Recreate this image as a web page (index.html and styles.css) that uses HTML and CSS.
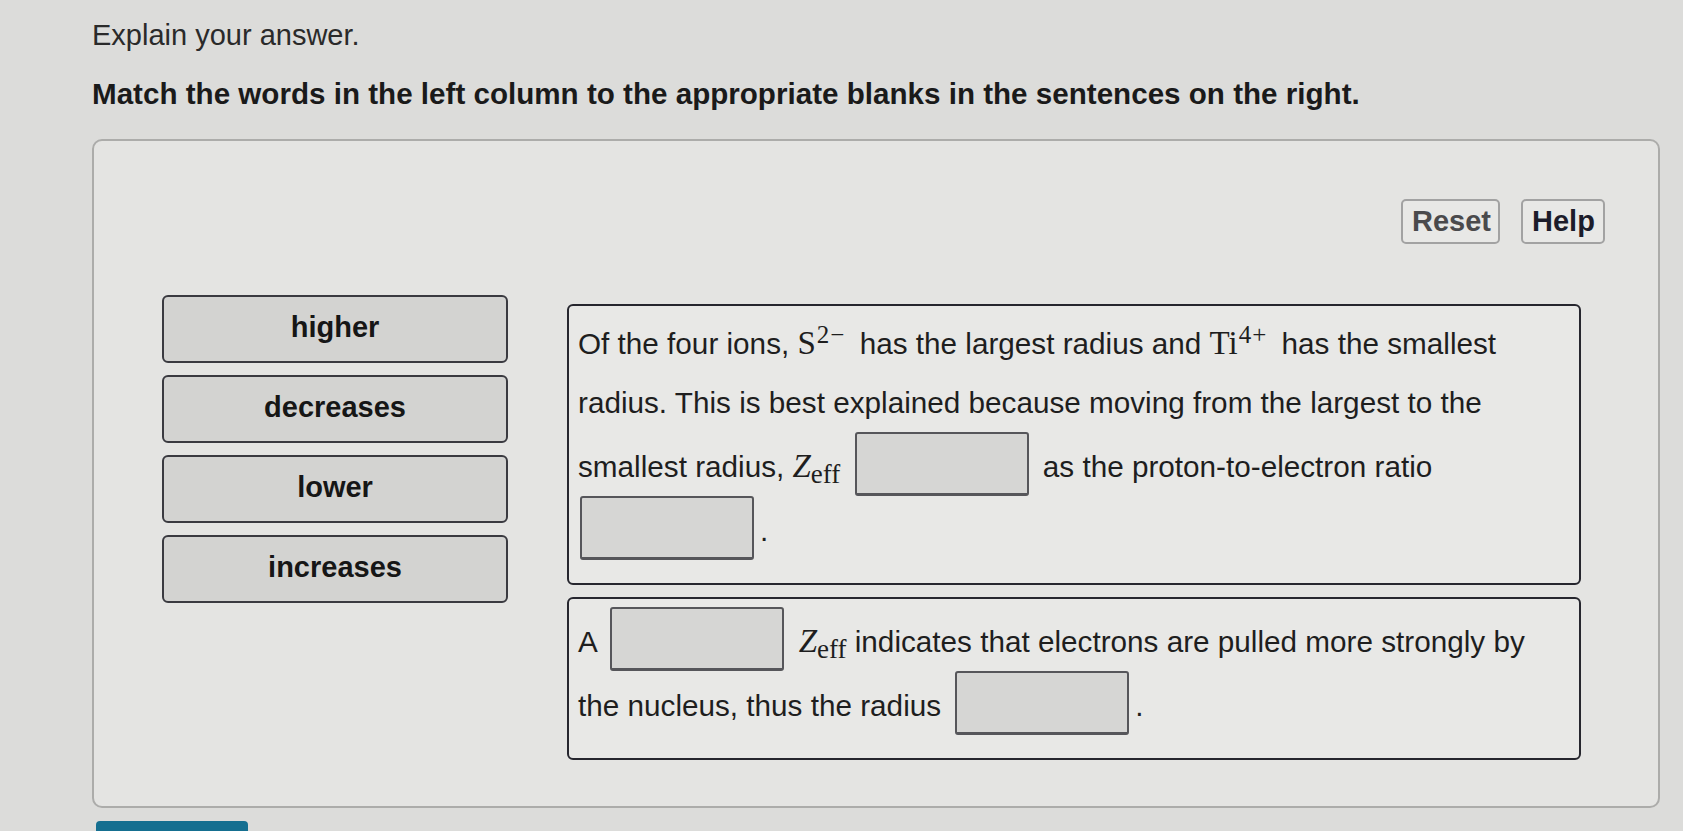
FILE: index.html
```html
<!DOCTYPE html>
<html lang="en">
<head>
<meta charset="utf-8">
<title>Match the words</title>
<link rel="stylesheet" href="styles.css">
</head>
<body>
<div class="page">
  <p class="intro">Explain your answer.</p>
  <p class="instruction">Match the words in the left column to the appropriate blanks in the sentences on the right.</p>
  <div class="panel">
    <div class="toolbar">
      <button class="tool reset">Reset</button>
      <button class="tool help">Help</button>
    </div>
    <div class="workspace">
      <div class="bank">
        <div class="tile">higher</div>
        <div class="tile">decreases</div>
        <div class="tile">lower</div>
        <div class="tile">increases</div>
      </div>
      <div class="sentences">
        <div class="sentence">Of the four ions, <span class="math">S<sup>2−</sup></span> has the largest radius and <span class="math">Ti<sup>4+</sup></span> has the smallest radius. This is best explained because moving from the largest to the smallest radius, <span class="math"><i>Z</i><sub>eff</sub></span> <span class="blank"></span> as the proton-to-electron ratio <span class="blank first"></span>.</div>
        <div class="sentence">A <span class="blank"></span> <span class="math"><i>Z</i><sub>eff</sub></span> indicates that electrons are pulled more strongly by the nucleus, thus the radius <span class="blank"></span>.</div>
      </div>
    </div>
  </div>
  <div class="submit"></div>
</div>
</body>
</html>
```

FILE: styles.css
```css
html, body {
  margin: 0;
  padding: 0;
  background: #dcdcda;
}

body {
  font-family: "Liberation Sans", Arial, sans-serif;
  color: #1c1c1c;
  overflow: hidden;
}

.page {
  padding-top: 18px;
  padding-left: 92px;
}

.intro {
  margin: 0;
  font-size: 29px;
  line-height: 34px;
  color: #2a2a2a;
}

.instruction {
  margin: 25px 0 0 0;
  font-size: 29.6px;
  line-height: 34px;
  font-weight: bold;
  color: #1a1a1a;
}

.panel {
  margin-top: 28px;
  width: 1568px;
  box-sizing: border-box;
  background: #e4e4e2;
  border: 2px solid #acacaa;
  border-radius: 10px;
  padding: 58px 53px 46px 68px;
}

.toolbar {
  display: flex;
  justify-content: flex-end;
  gap: 21px;
}

.tool {
  font-family: "Liberation Sans", Arial, sans-serif;
  font-size: 29px;
  font-weight: bold;
  height: 45px;
  padding: 0 9px;
  background: #e8e8e6;
  border: 2px solid #a2a2a2;
  border-radius: 5px;
  line-height: 41px;
}

.reset {
  color: #4a4a4c;
  width: 99px;
}

.help {
  color: #1c1c2a;
  width: 84px;
}

.workspace {
  display: flex;
  align-items: flex-start;
  gap: 59px;
  margin-top: 51px;
}

.bank {
  display: flex;
  flex-direction: column;
  gap: 12px;
  width: 346px;
  flex: none;
}

.tile {
  height: 68px;
  box-sizing: border-box;
  background: #d3d3d1;
  border: 2px solid #3a3a40;
  border-radius: 6px;
  text-align: center;
  font-size: 29px;
  font-weight: bold;
  line-height: 60px;
  color: #161616;
}

.sentences {
  display: flex;
  flex-direction: column;
  gap: 12px;
  margin-top: 9px;
  width: 1014px;
}

.sentence {
  background: #e8e8e6;
  border: 2px solid #26262e;
  border-radius: 6px;
  padding: 8px 14px 23px 9px;
  font-size: 29.7px;
  line-height: 59px;
  color: #1e1e1e;
}

.math {
  font-family: "Liberation Serif", "Times New Roman", serif;
  font-size: 33px;
}

.math sup {
  font-size: 25px;
  vertical-align: 11px;
  line-height: 0;
  letter-spacing: 1px;
  margin-left: 1px;
  margin-right: 6px;
}

.math sub {
  font-size: 27px;
  vertical-align: -6px;
  line-height: 0;
}

.math i {
  font-style: italic;
}

.blank {
  display: inline-block;
  width: 174px;
  height: 64px;
  box-sizing: border-box;
  background: #d6d6d4;
  border: 2px solid #56565a;
  border-bottom-width: 3px;
  border-radius: 3px;
  vertical-align: -19px;
  margin: 0 6px;
}

.blank.first {
  margin-left: 2px;
}

.submit {
  margin-top: 13px;
  margin-left: 4px;
  width: 152px;
  height: 40px;
  background: #156f90;
  border-radius: 4px 4px 0 0;
}
```
